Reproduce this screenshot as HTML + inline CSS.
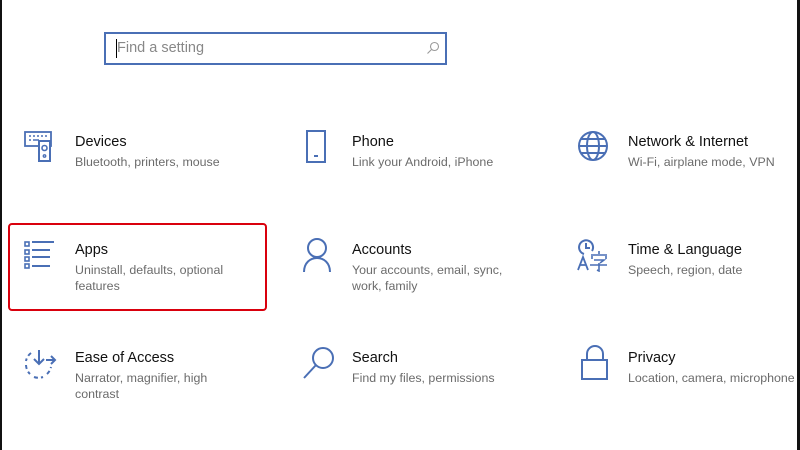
<!DOCTYPE html>
<html><head><style>
body{margin:0;width:800px;height:450px;background:#fff;position:relative;overflow:hidden;font-family:"Liberation Sans",sans-serif;}
.bl{position:absolute;left:0;top:0;width:2px;height:450px;background:#111}
.br{position:absolute;right:0;top:0;width:3px;height:450px;background:#111}
.search{position:absolute;left:104px;top:32px;width:339px;height:29px;border:2px solid #4a6fb5;}
.search span{position:absolute;left:11px;top:6px;font-size:14.5px;color:#888}
.search .cur{position:absolute;left:10px;top:5px;width:1px;height:19px;background:#000}
.t{position:absolute;font-size:14.5px;color:#111;white-space:nowrap}
.s{position:absolute;font-size:12.4px;color:#6b6b6b;line-height:16px;white-space:nowrap}
svg{position:absolute;fill:none;stroke:#4a6fb5;stroke-width:2}
.red{position:absolute;left:8px;top:223px;width:255px;height:84px;border:2.5px solid #d9000d;border-radius:4px}
</style></head><body>
<div class="bl"></div><div class="br"></div>
<div class="search"><div class="cur"></div><span>Find a setting</span>
<svg style="left:320px;top:7px" width="14" height="14" viewBox="0 0 14 14"><circle cx="8.5" cy="5.5" r="4" stroke-width="1.1" stroke="#999"/><path d="M5.5 8.5L1.5 12.5" stroke-width="1.1" stroke="#999"/></svg></div>

<svg style="left:23px;top:130px" width="34" height="34" viewBox="0 0 34 34"><rect x="2" y="2" width="26" height="14" stroke-width="1.8"/><path d="M6 6h2M10 6h2M14 6h2M18 6h2M22 6h2M6 10h2M10 10h6" stroke-width="1.6"/><rect x="16" y="11" width="11" height="20" fill="#fff" stroke-width="2"/><circle cx="21.5" cy="18" r="2.5" stroke-width="1.6"/><circle cx="21.5" cy="26" r="1.2" stroke-width="1.4"/></svg>
<div class="t" style="left:75px;top:134px">Devices</div>
<div class="s" style="left:75px;top:154px">Bluetooth, printers, mouse</div>

<svg style="left:305px;top:130px" width="24" height="34" viewBox="0 0 24 34"><rect x="2" y="1" width="18" height="31"/><path d="M9 26h4"/></svg>
<div class="t" style="left:352px;top:134px">Phone</div>
<div class="s" style="left:352px;top:154px">Link your Android, iPhone</div>

<svg style="left:577px;top:130px" width="34" height="34" viewBox="0 0 34 34"><circle cx="16" cy="16" r="14"/><ellipse cx="16" cy="16" rx="6" ry="14"/><path d="M2 16h28M4 9h24M4 23h24"/></svg>
<div class="t" style="left:628px;top:134px">Network &amp; Internet</div>
<div class="s" style="left:628px;top:154px">Wi-Fi, airplane mode, VPN</div>

<div class="red"></div>
<svg style="left:23px;top:240px" width="34" height="30" viewBox="0 0 34 30"><rect x="2" y="2" width="4" height="4" stroke-width="1.6"/><rect x="2" y="10" width="4" height="4" stroke-width="1.6"/><rect x="2" y="17" width="4" height="4" stroke-width="1.6"/><rect x="2" y="24" width="4" height="4" stroke-width="1.6"/><path d="M9 2h22M9 10h18M9 17h18M9 26h18"/></svg>
<div class="t" style="left:75px;top:242px">Apps</div>
<div class="s" style="left:75px;top:262px">Uninstall, defaults, optional<br>features</div>

<svg style="left:302px;top:237px" width="34" height="36" viewBox="0 0 34 36"><circle cx="15" cy="11" r="9"/><path d="M2 35c0-9 6-14 13-14s13 5 13 14"/></svg>
<div class="t" style="left:352px;top:242px">Accounts</div>
<div class="s" style="left:352px;top:262px">Your accounts, email, sync,<br>work, family</div>

<svg style="left:576px;top:238px" width="34" height="34" viewBox="0 0 34 34"><path d="M8 16a7 7 0 1 1 8-3" /><path d="M10 5v5h4"/><path d="M2 32l5-13 5 13M4 27h6" stroke-width="1.8"/><path d="M15 17h16M23 13v3M16 21v-3M30 21v-3M18 22h10l-4 3M14 27h17M23 25v8l-2 -1" stroke-width="1.6"/></svg>
<div class="t" style="left:628px;top:242px">Time &amp; Language</div>
<div class="s" style="left:628px;top:262px">Speech, region, date</div>

<svg style="left:23px;top:347px" width="34" height="34" viewBox="0 0 34 34"><path d="M16 3v14M11 12l5 5 5-5M23 13h9M28 9l4 4-4 4"/><path d="M8 6a13 13 0 0 0-5 8M3 18a13 13 0 0 0 4 9M11 30a13 13 0 0 0 9 0M24 27a13 13 0 0 0 4-7" stroke-dasharray="4 3"/></svg>
<div class="t" style="left:75px;top:350px">Ease of Access</div>
<div class="s" style="left:75px;top:370px">Narrator, magnifier, high<br>contrast</div>

<svg style="left:302px;top:346px" width="34" height="34" viewBox="0 0 34 34"><circle cx="21" cy="12" r="10"/><path d="M14 19L2 32"/></svg>
<div class="t" style="left:352px;top:350px">Search</div>
<div class="s" style="left:352px;top:370px">Find my files, permissions</div>

<svg style="left:580px;top:345px" width="30" height="36" viewBox="0 0 30 36"><path d="M7 15V9a8 8 0 0 1 16 0v6"/><rect x="2" y="15" width="25" height="19"/></svg>
<div class="t" style="left:628px;top:350px">Privacy</div>
<div class="s" style="left:628px;top:370px">Location, camera, microphone</div>
</body></html>
